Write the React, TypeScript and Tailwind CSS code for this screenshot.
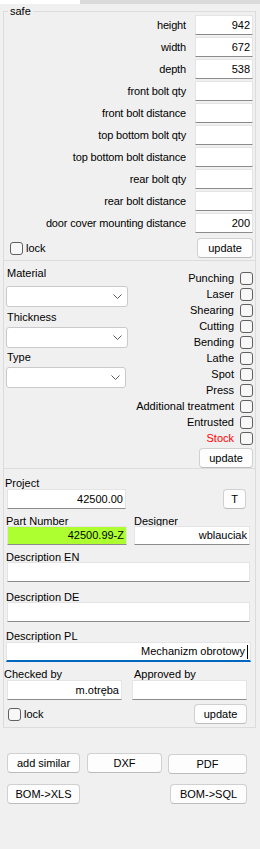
const safeFields: [string, string][] = [
  ['height', '942'],
  ['width', '672'],
  ['depth', '538'],
  ['front bolt qty', ''],
  ['front bolt distance', ''],
  ['top bottom bolt qty', ''],
  ['top bottom bolt distance', ''],
  ['rear bolt qty', ''],
  ['rear bolt distance', ''],
  ['door cover mounting distance', '200'],
];

const operations = [
  'Punching',
  'Laser',
  'Shearing',
  'Cutting',
  'Bending',
  'Lathe',
  'Spot',
  'Press',
  'Additional treatment',
  'Entrusted',
  'Stock',
];

function TextBox({ value = '', className = '', caret = false }: { value?: string; className?: string; caret?: boolean }) {
  return (
    <div
      className={`flex items-center justify-end overflow-hidden whitespace-nowrap border border-[#e4e4e4] border-b-[#8c8c8c] pr-[2px] ${className}`}
    >
      {value}
      {caret && <span className="ml-[2px] h-[14px] w-px bg-black" />}
    </div>
  );
}

function CheckBox({ className = '' }: { className?: string }) {
  return <span className={`block h-[13px] w-[13px] shrink-0 rounded-[3px] border border-[#606060] bg-[#f7f7f7] ${className}`} />;
}

function Btn({ children, className = '' }: { children: React.ReactNode; className?: string }) {
  return (
    <button
      className={`flex h-[20px] items-center justify-center rounded-[4px] border border-[#d0d0d0] border-b-[#bcbcbc] bg-[#fdfdfd] leading-none text-black ${className}`}
    >
      {children}
    </button>
  );
}

function Combo({ className = '' }: { className?: string }) {
  return (
    <div className={`flex h-[21px] items-center justify-end rounded-[3px] border border-[#cacaca] bg-white pr-[5px] ${className}`}>
      <svg width="9" height="5" viewBox="0 0 9 5">
        <path d="M0.5 0.5 L4.5 4.5 L8.5 0.5" fill="none" stroke="#5a5a5a" strokeWidth="1" />
      </svg>
    </div>
  );
}

export default function App() {
  return (
    <div className="h-[849px] w-[260px] overflow-hidden bg-[#f0f0f0] font-['Liberation_Sans',Arial,sans-serif] text-[11px] text-black">
      {/* tab strip */}
      <div className="flex h-[4px]">
        <div className="w-[80px] bg-white" />
        <div className="flex-1 bg-[#dadada]" />
      </div>

      {/* safe group */}
      <fieldset className="ml-[3px] mr-[4px] mt-px border border-[#dcdcdc] pb-[2px]">
        <legend className="ml-[4px] h-[13px] px-[2px] leading-[13px]">safe</legend>
        <div className="-mt-[3px] flex flex-col gap-[2px] pr-[2px]">
          {safeFields.map(([label, value]) => (
            <div key={label} className="flex h-[20px] items-center justify-end gap-[9px]">
              <span className="whitespace-nowrap tracking-[-0.15px]">{label}</span>
              <TextBox value={value} className="h-[20px] w-[58px] bg-white" />
            </div>
          ))}
        </div>
        <div className="mt-[5px] flex items-center justify-between pl-[6px] pr-[2px]">
          <div className="flex items-center gap-[3px]">
            <CheckBox />
            <span>lock</span>
          </div>
          <Btn className="w-[56px]">update</Btn>
        </div>
      </fieldset>

      {/* material / operations */}
      <div className="ml-[3px] mr-[4px] flex h-[208px] justify-between border-x border-b border-[#dcdcdc]">
        <div className="w-[126px] pl-[2px] pt-[6px]">
          <div className="h-[13px] pl-[1px] leading-[13px]">Material</div>
          <Combo className="mt-[6px] w-[122px]" />
          <div className="mt-[4px] h-[13px] pl-[1px] leading-[13px]">Thickness</div>
          <Combo className="mt-[3px] w-[122px]" />
          <div className="mt-[3px] h-[13px] pl-[1px] leading-[13px]">Type</div>
          <Combo className="mt-[3px] w-[120px]" />
        </div>
        <div className="flex flex-col items-end pr-[2px] pt-[9px]">
          {operations.map((op) => (
            <div key={op} className="flex h-[16px] items-center gap-[6px]">
              <span className={`whitespace-nowrap ${op === 'Stock' ? 'text-[#ff0000]' : ''}`}>{op}</span>
              <CheckBox />
            </div>
          ))}
          <Btn className="mt-[2px] w-[54px]">update</Btn>
        </div>
      </div>

      {/* project data */}
      <div className="ml-[3px] mr-[4px] border-x border-b border-[#dcdcdc] pb-[3px] pt-[9px]">
        <div className="h-[11px] pl-[1px] leading-[11px]">Project</div>
        <div className="flex h-[20px] items-center">
          <TextBox value="42500.00" className="ml-[3px] h-[20px] w-[119px] bg-white" />
          <Btn className="ml-[97px] h-[16px] w-[23px]">T</Btn>
        </div>

        <div className="mt-[7px] flex h-[10px] overflow-hidden leading-[11px]">
          <div className="w-[130px] pl-[2px]">Part Number</div>
          <div>Designer</div>
        </div>
        <div className="flex h-[19px]">
          <TextBox value="42500.99-Z" className="ml-[3px] w-[120px] bg-[#adff2f]" />
          <TextBox value="wblauciak" className="ml-[7px] w-[116px] bg-white" />
        </div>

        <div className="mt-[7px] h-[10px] overflow-hidden pl-[2px] leading-[11px]">Description EN</div>
        <TextBox className="ml-[3px] h-[20px] w-[243px] bg-white" />

        <div className="mt-[10px] h-[10px] overflow-hidden pl-[2px] leading-[11px]">Description DE</div>
        <TextBox className="ml-[3px] h-[20px] w-[243px] bg-white" />

        <div className="mt-[9px] h-[11px] overflow-hidden pl-[2px] leading-[11px]">Description PL</div>
        <TextBox
          value="Mechanizm obrotowy"
          caret
          className="ml-[2px] h-[20px] w-[245px] border-b-2 !border-b-[#0067c0] bg-white"
        />

        <div className="mt-[7px] flex h-[11px] overflow-hidden leading-[11px]">
          <div className="w-[130px]">Checked by</div>
          <div>Approved by</div>
        </div>
        <div className="flex h-[20px]">
          <TextBox value="m.otręba" className="ml-[3px] w-[115px] bg-white" />
          <TextBox className="ml-[10px] w-[115px] bg-white" />
        </div>

        <div className="mt-[4px] flex items-center justify-between pl-[4px] pr-[8px]">
          <div className="flex items-center gap-[3px]">
            <CheckBox />
            <span>lock</span>
          </div>
          <Btn className="w-[53px]">update</Btn>
        </div>
      </div>

      {/* actions */}
      <div className="mt-[25px] pl-[7px]">
        <div className="flex items-start">
          <Btn className="w-[73px]">add similar</Btn>
          <Btn className="ml-[7px] w-[75px]">DXF</Btn>
          <Btn className="ml-[6px] mt-px w-[79px]">PDF</Btn>
        </div>
        <div className="mt-[10px] flex">
          <Btn className="w-[73px]">BOM-&gt;XLS</Btn>
          <Btn className="ml-[90px] w-[77px]">BOM-&gt;SQL</Btn>
        </div>
      </div>
    </div>
  );
}
